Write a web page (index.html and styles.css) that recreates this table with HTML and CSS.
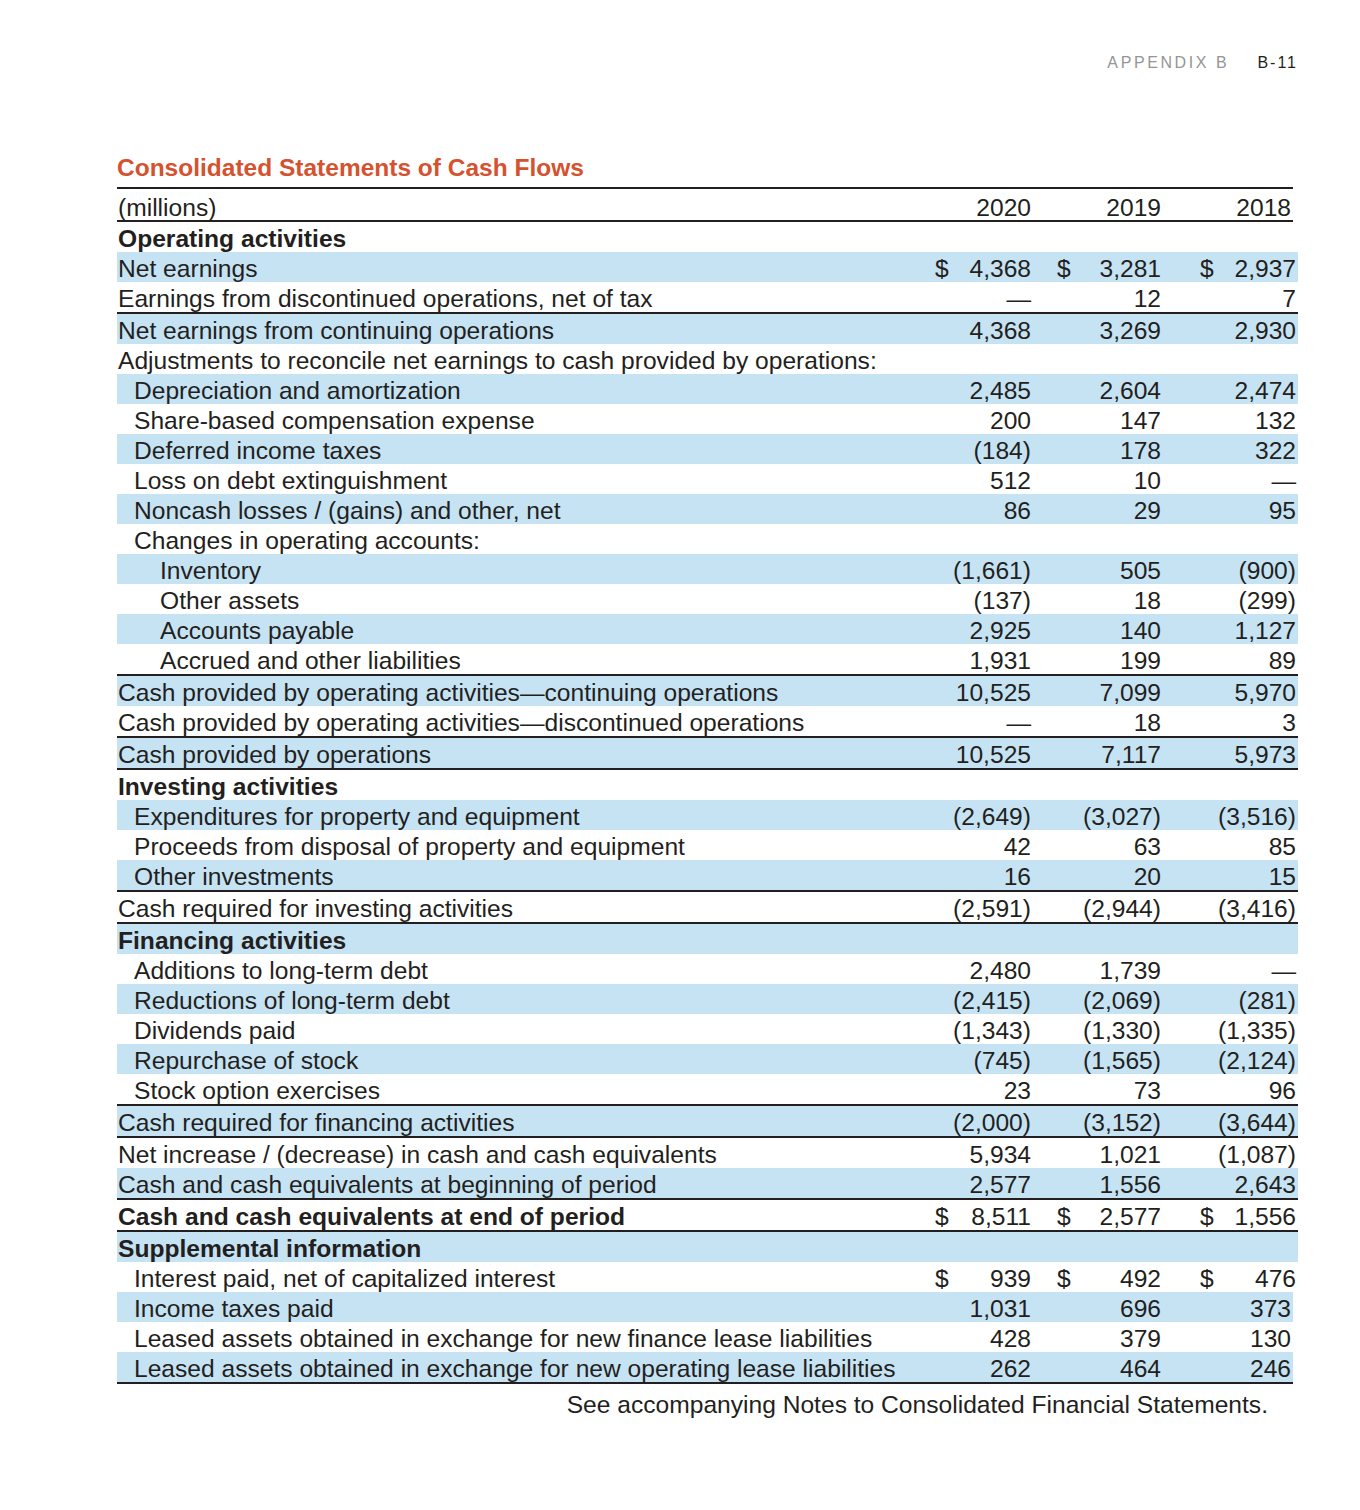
FILE: index.html
```html
<!DOCTYPE html>
<html lang="en">
<head>
<meta charset="utf-8">
<title>Consolidated Statements of Cash Flows</title>
<link rel="stylesheet" href="styles.css">
</head>
<body>
<div class="page">
  <div class="running-head">
    <span class="appendix">APPENDIX B</span>
    <span class="folio">B-11</span>
  </div>
  <h1 class="title">Consolidated Statements of Cash Flows</h1>
  <div class="table">
    <div class="row hdr n"><div class="lbl">(millions)</div><div class="v c1"><span>2020</span></div><div class="v c2"><span>2019</span></div><div class="v c3"><span>2018</span></div></div>

    <div class="row"><div class="lbl bold">Operating activities</div><div class="v c1"></div><div class="v c2"></div><div class="v c3"></div></div>
    <div class="row b"><div class="lbl">Net earnings</div><div class="v c1"><span class="d">$</span><span>4,368</span></div><div class="v c2"><span class="d">$</span><span>3,281</span></div><div class="v c3"><span class="d">$</span><span>2,937</span></div></div>
    <div class="row r"><div class="lbl">Earnings from discontinued operations, net of tax</div><div class="v c1"><span>—</span></div><div class="v c2"><span>12</span></div><div class="v c3"><span>7</span></div></div>
    <div class="row b"><div class="lbl">Net earnings from continuing operations</div><div class="v c1"><span>4,368</span></div><div class="v c2"><span>3,269</span></div><div class="v c3"><span>2,930</span></div></div>
    <div class="row"><div class="lbl">Adjustments to reconcile net earnings to cash provided by operations:</div><div class="v c1"></div><div class="v c2"></div><div class="v c3"></div></div>
    <div class="row b"><div class="lbl i1">Depreciation and amortization</div><div class="v c1"><span>2,485</span></div><div class="v c2"><span>2,604</span></div><div class="v c3"><span>2,474</span></div></div>
    <div class="row"><div class="lbl i1">Share-based compensation expense</div><div class="v c1"><span>200</span></div><div class="v c2"><span>147</span></div><div class="v c3"><span>132</span></div></div>
    <div class="row b"><div class="lbl i1">Deferred income taxes</div><div class="v c1"><span>(184)</span></div><div class="v c2"><span>178</span></div><div class="v c3"><span>322</span></div></div>
    <div class="row"><div class="lbl i1">Loss on debt extinguishment</div><div class="v c1"><span>512</span></div><div class="v c2"><span>10</span></div><div class="v c3"><span>—</span></div></div>
    <div class="row b"><div class="lbl i1">Noncash losses / (gains) and other, net</div><div class="v c1"><span>86</span></div><div class="v c2"><span>29</span></div><div class="v c3"><span>95</span></div></div>
    <div class="row"><div class="lbl i1">Changes in operating accounts:</div><div class="v c1"></div><div class="v c2"></div><div class="v c3"></div></div>
    <div class="row b"><div class="lbl i2">Inventory</div><div class="v c1"><span>(1,661)</span></div><div class="v c2"><span>505</span></div><div class="v c3"><span>(900)</span></div></div>
    <div class="row"><div class="lbl i2">Other assets</div><div class="v c1"><span>(137)</span></div><div class="v c2"><span>18</span></div><div class="v c3"><span>(299)</span></div></div>
    <div class="row b"><div class="lbl i2">Accounts payable</div><div class="v c1"><span>2,925</span></div><div class="v c2"><span>140</span></div><div class="v c3"><span>1,127</span></div></div>
    <div class="row r"><div class="lbl i2">Accrued and other liabilities</div><div class="v c1"><span>1,931</span></div><div class="v c2"><span>199</span></div><div class="v c3"><span>89</span></div></div>
    <div class="row b"><div class="lbl">Cash provided by operating activities—continuing operations</div><div class="v c1"><span>10,525</span></div><div class="v c2"><span>7,099</span></div><div class="v c3"><span>5,970</span></div></div>
    <div class="row r"><div class="lbl">Cash provided by operating activities—discontinued operations</div><div class="v c1"><span>—</span></div><div class="v c2"><span>18</span></div><div class="v c3"><span>3</span></div></div>
    <div class="row b r"><div class="lbl">Cash provided by operations</div><div class="v c1"><span>10,525</span></div><div class="v c2"><span>7,117</span></div><div class="v c3"><span>5,973</span></div></div>

    <div class="row"><div class="lbl bold">Investing activities</div><div class="v c1"></div><div class="v c2"></div><div class="v c3"></div></div>
    <div class="row b"><div class="lbl i1">Expenditures for property and equipment</div><div class="v c1"><span>(2,649)</span></div><div class="v c2"><span>(3,027)</span></div><div class="v c3"><span>(3,516)</span></div></div>
    <div class="row"><div class="lbl i1">Proceeds from disposal of property and equipment</div><div class="v c1"><span>42</span></div><div class="v c2"><span>63</span></div><div class="v c3"><span>85</span></div></div>
    <div class="row b r"><div class="lbl i1">Other investments</div><div class="v c1"><span>16</span></div><div class="v c2"><span>20</span></div><div class="v c3"><span>15</span></div></div>
    <div class="row r"><div class="lbl">Cash required for investing activities</div><div class="v c1"><span>(2,591)</span></div><div class="v c2"><span>(2,944)</span></div><div class="v c3"><span>(3,416)</span></div></div>

    <div class="row b"><div class="lbl bold">Financing activities</div><div class="v c1"></div><div class="v c2"></div><div class="v c3"></div></div>
    <div class="row"><div class="lbl i1">Additions to long-term debt</div><div class="v c1"><span>2,480</span></div><div class="v c2"><span>1,739</span></div><div class="v c3"><span>—</span></div></div>
    <div class="row b"><div class="lbl i1">Reductions of long-term debt</div><div class="v c1"><span>(2,415)</span></div><div class="v c2"><span>(2,069)</span></div><div class="v c3"><span>(281)</span></div></div>
    <div class="row"><div class="lbl i1">Dividends paid</div><div class="v c1"><span>(1,343)</span></div><div class="v c2"><span>(1,330)</span></div><div class="v c3"><span>(1,335)</span></div></div>
    <div class="row b"><div class="lbl i1">Repurchase of stock</div><div class="v c1"><span>(745)</span></div><div class="v c2"><span>(1,565)</span></div><div class="v c3"><span>(2,124)</span></div></div>
    <div class="row r"><div class="lbl i1">Stock option exercises</div><div class="v c1"><span>23</span></div><div class="v c2"><span>73</span></div><div class="v c3"><span>96</span></div></div>
    <div class="row b r"><div class="lbl">Cash required for financing activities</div><div class="v c1"><span>(2,000)</span></div><div class="v c2"><span>(3,152)</span></div><div class="v c3"><span>(3,644)</span></div></div>

    <div class="row"><div class="lbl">Net increase / (decrease) in cash and cash equivalents</div><div class="v c1"><span>5,934</span></div><div class="v c2"><span>1,021</span></div><div class="v c3"><span>(1,087)</span></div></div>
    <div class="row b r"><div class="lbl">Cash and cash equivalents at beginning of period</div><div class="v c1"><span>2,577</span></div><div class="v c2"><span>1,556</span></div><div class="v c3"><span>2,643</span></div></div>
    <div class="row r"><div class="lbl bold">Cash and cash equivalents at end of period</div><div class="v c1"><span class="d">$</span><span>8,511</span></div><div class="v c2"><span class="d">$</span><span>2,577</span></div><div class="v c3"><span class="d">$</span><span>1,556</span></div></div>

    <div class="row b"><div class="lbl bold">Supplemental information</div><div class="v c1"></div><div class="v c2"></div><div class="v c3"></div></div>
    <div class="row"><div class="lbl i1">Interest paid, net of capitalized interest</div><div class="v c1"><span class="d">$</span><span>939</span></div><div class="v c2"><span class="d">$</span><span>492</span></div><div class="v c3"><span class="d">$</span><span>476</span></div></div>
    <div class="row b n"><div class="lbl i1">Income taxes paid</div><div class="v c1"><span>1,031</span></div><div class="v c2"><span>696</span></div><div class="v c3"><span>373</span></div></div>
    <div class="row n"><div class="lbl i1">Leased assets obtained in exchange for new finance lease liabilities</div><div class="v c1"><span>428</span></div><div class="v c2"><span>379</span></div><div class="v c3"><span>130</span></div></div>
    <div class="row b r n"><div class="lbl i1">Leased assets obtained in exchange for new operating lease liabilities</div><div class="v c1"><span>262</span></div><div class="v c2"><span>464</span></div><div class="v c3"><span>246</span></div></div>
  </div>
  <p class="note">See accompanying Notes to Consolidated Financial Statements.</p>
</div>
</body>
</html>
```

FILE: styles.css
```css
html, body {
  margin: 0;
  padding: 0;
  background: #ffffff;
}

body {
  font-family: "Liberation Sans", Arial, Helvetica, sans-serif;
  color: #231f20;
}

.page {
  width: 1181px;
  padding: 53px 0 0 117px;
}

.running-head {
  display: flex;
  justify-content: flex-end;
  align-items: baseline;
  gap: 28px;
  font-size: 16px;
  line-height: 20px;
}

.appendix {
  color: #959595;
  letter-spacing: 2.6px;
}

.folio {
  color: #231f20;
  letter-spacing: 2px;
}

.title {
  margin: 80px 0 4px 0;
  font-size: 24.5px;
  line-height: 30px;
  font-weight: bold;
  color: #d5522f;
  white-space: nowrap;
}

.table {
  width: 1181px;
  font-size: 24.6px;
}

.row {
  display: grid;
  grid-template-columns: 1fr 100px 130px 135px;
  box-sizing: border-box;
  height: 30px;
  padding-top: 3px;
  line-height: 27px;
  white-space: nowrap;
}

.row.b {
  background: #c6e3f4;
}

.row.r {
  height: 32px;
  border-bottom: 2px solid #231f20;
}

.row.n {
  width: 1176px;
  grid-template-columns: 1fr 100px 130px 130px;
}

.row.hdr {
  border-top: 2px solid #231f20;
  border-bottom: 2px solid #231f20;
  height: 35px;
  padding-top: 5px;
}

.lbl {
  padding-left: 1px;
}

.lbl.i1 {
  padding-left: 17px;
}

.lbl.i2 {
  padding-left: 43px;
}

.bold {
  font-weight: bold;
}

.v {
  display: flex;
  justify-content: flex-end;
  padding-right: 2px;
}

.v.c1 {
  padding-left: 2px;
}

.v.c2 {
  padding-left: 24px;
}

.v.c3 {
  padding-left: 37px;
}

.v .d {
  margin-right: auto;
}

.note {
  margin: 0;
  padding: 7px 30px 0 0;
  font-size: 24.6px;
  line-height: 28px;
  text-align: right;
  white-space: nowrap;
}
```
